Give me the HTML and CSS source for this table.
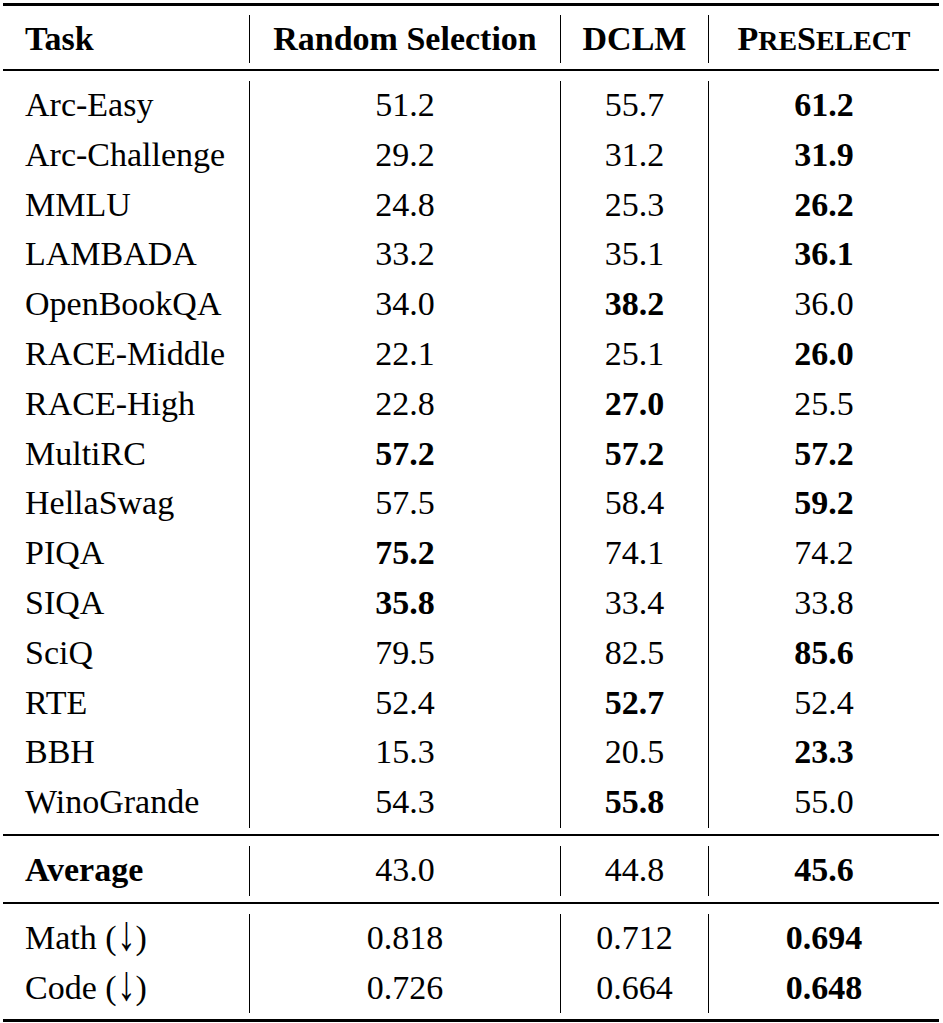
FILE: index.html
```html
<!DOCTYPE html>
<html>
<head>
<meta charset="utf-8">
<link rel="stylesheet" href="styles.css">
</head>
<body>
<div class="tbl">
  <div class="rule thick first"></div>
  <div class="sec head">
    <div class="c l b">Task</div>
    <div class="c b">Random Selection</div>
    <div class="c b">DCLM</div>
    <div class="c last b">P<span class="sm">re</span>S<span class="sm">elect</span></div>
  </div>
  <div class="rule thin"></div>
  <div class="sec rows">
    <div class="c l">Arc-Easy</div><div class="c">51.2</div><div class="c">55.7</div><div class="c last b">61.2</div>
    <div class="c l">Arc-Challenge</div><div class="c">29.2</div><div class="c">31.2</div><div class="c last b">31.9</div>
    <div class="c l">MMLU</div><div class="c">24.8</div><div class="c">25.3</div><div class="c last b">26.2</div>
    <div class="c l">LAMBADA</div><div class="c">33.2</div><div class="c">35.1</div><div class="c last b">36.1</div>
    <div class="c l">OpenBookQA</div><div class="c">34.0</div><div class="c b">38.2</div><div class="c last">36.0</div>
    <div class="c l">RACE-Middle</div><div class="c">22.1</div><div class="c">25.1</div><div class="c last b">26.0</div>
    <div class="c l">RACE-High</div><div class="c">22.8</div><div class="c b">27.0</div><div class="c last">25.5</div>
    <div class="c l">MultiRC</div><div class="c b">57.2</div><div class="c b">57.2</div><div class="c last b">57.2</div>
    <div class="c l">HellaSwag</div><div class="c">57.5</div><div class="c">58.4</div><div class="c last b">59.2</div>
    <div class="c l">PIQA</div><div class="c b">75.2</div><div class="c">74.1</div><div class="c last">74.2</div>
    <div class="c l">SIQA</div><div class="c b">35.8</div><div class="c">33.4</div><div class="c last">33.8</div>
    <div class="c l">SciQ</div><div class="c">79.5</div><div class="c">82.5</div><div class="c last b">85.6</div>
    <div class="c l">RTE</div><div class="c">52.4</div><div class="c b">52.7</div><div class="c last">52.4</div>
    <div class="c l">BBH</div><div class="c">15.3</div><div class="c">20.5</div><div class="c last b">23.3</div>
    <div class="c l">WinoGrande</div><div class="c">54.3</div><div class="c b">55.8</div><div class="c last">55.0</div>
  </div>
  <div class="rule thin"></div>
  <div class="sec rows avg">
    <div class="c l b">Average</div><div class="c">43.0</div><div class="c">44.8</div><div class="c last b">45.6</div>
  </div>
  <div class="rule thin"></div>
  <div class="sec rows">
    <div class="c l">Math (<span class="arr">↓</span>)</div><div class="c">0.818</div><div class="c">0.712</div><div class="c last b">0.694</div>
    <div class="c l">Code (<span class="arr">↓</span>)</div><div class="c">0.726</div><div class="c">0.664</div><div class="c last b">0.648</div>
  </div>
  <div class="rule thick"></div>
</div>
</body>
</html>
```

FILE: styles.css
```css
html, body {
  margin: 0;
  padding: 0;
  background: #ffffff;
}

.tbl {
  width: 936px;
  margin-left: 3px;
  font-family: "Liberation Serif", "Times New Roman", serif;
  font-size: 34px;
  color: #000;
}

.rule {
  background: #000;
  width: 100%;
}

.rule.thick {
  height: 3px;
  margin-top: 6px;
}

.rule.first {
  margin-top: 3px;
}

.rule.thin {
  height: 2px;
  margin-top: 6px;
  margin-bottom: 10px;
}

.sec {
  display: grid;
  grid-template-columns: 247px 311px 148px 230px;
}

.head {
  margin-top: 9px;
  margin-bottom: 1px;
}

.head .c {
  height: 48px;
  line-height: 48px;
}

.c {
  border-right: 1px solid #000;
  text-align: center;
  height: 49.8px;
  line-height: 47.2px;
  white-space: nowrap;
}

.c.l {
  text-align: left;
  padding-left: 22px;
}

.c.last {
  border-right: none;
}

.b {
  font-weight: bold;
}

.sm {
  font-size: 0.82em;
  text-transform: uppercase;
}

.arr {
  display: inline-block;
  transform: scale(1.1, 1.45);
  transform-origin: 50% 70%;
  margin: 0 1px;
}

.avg {
  margin-top: 1px;
}
```
